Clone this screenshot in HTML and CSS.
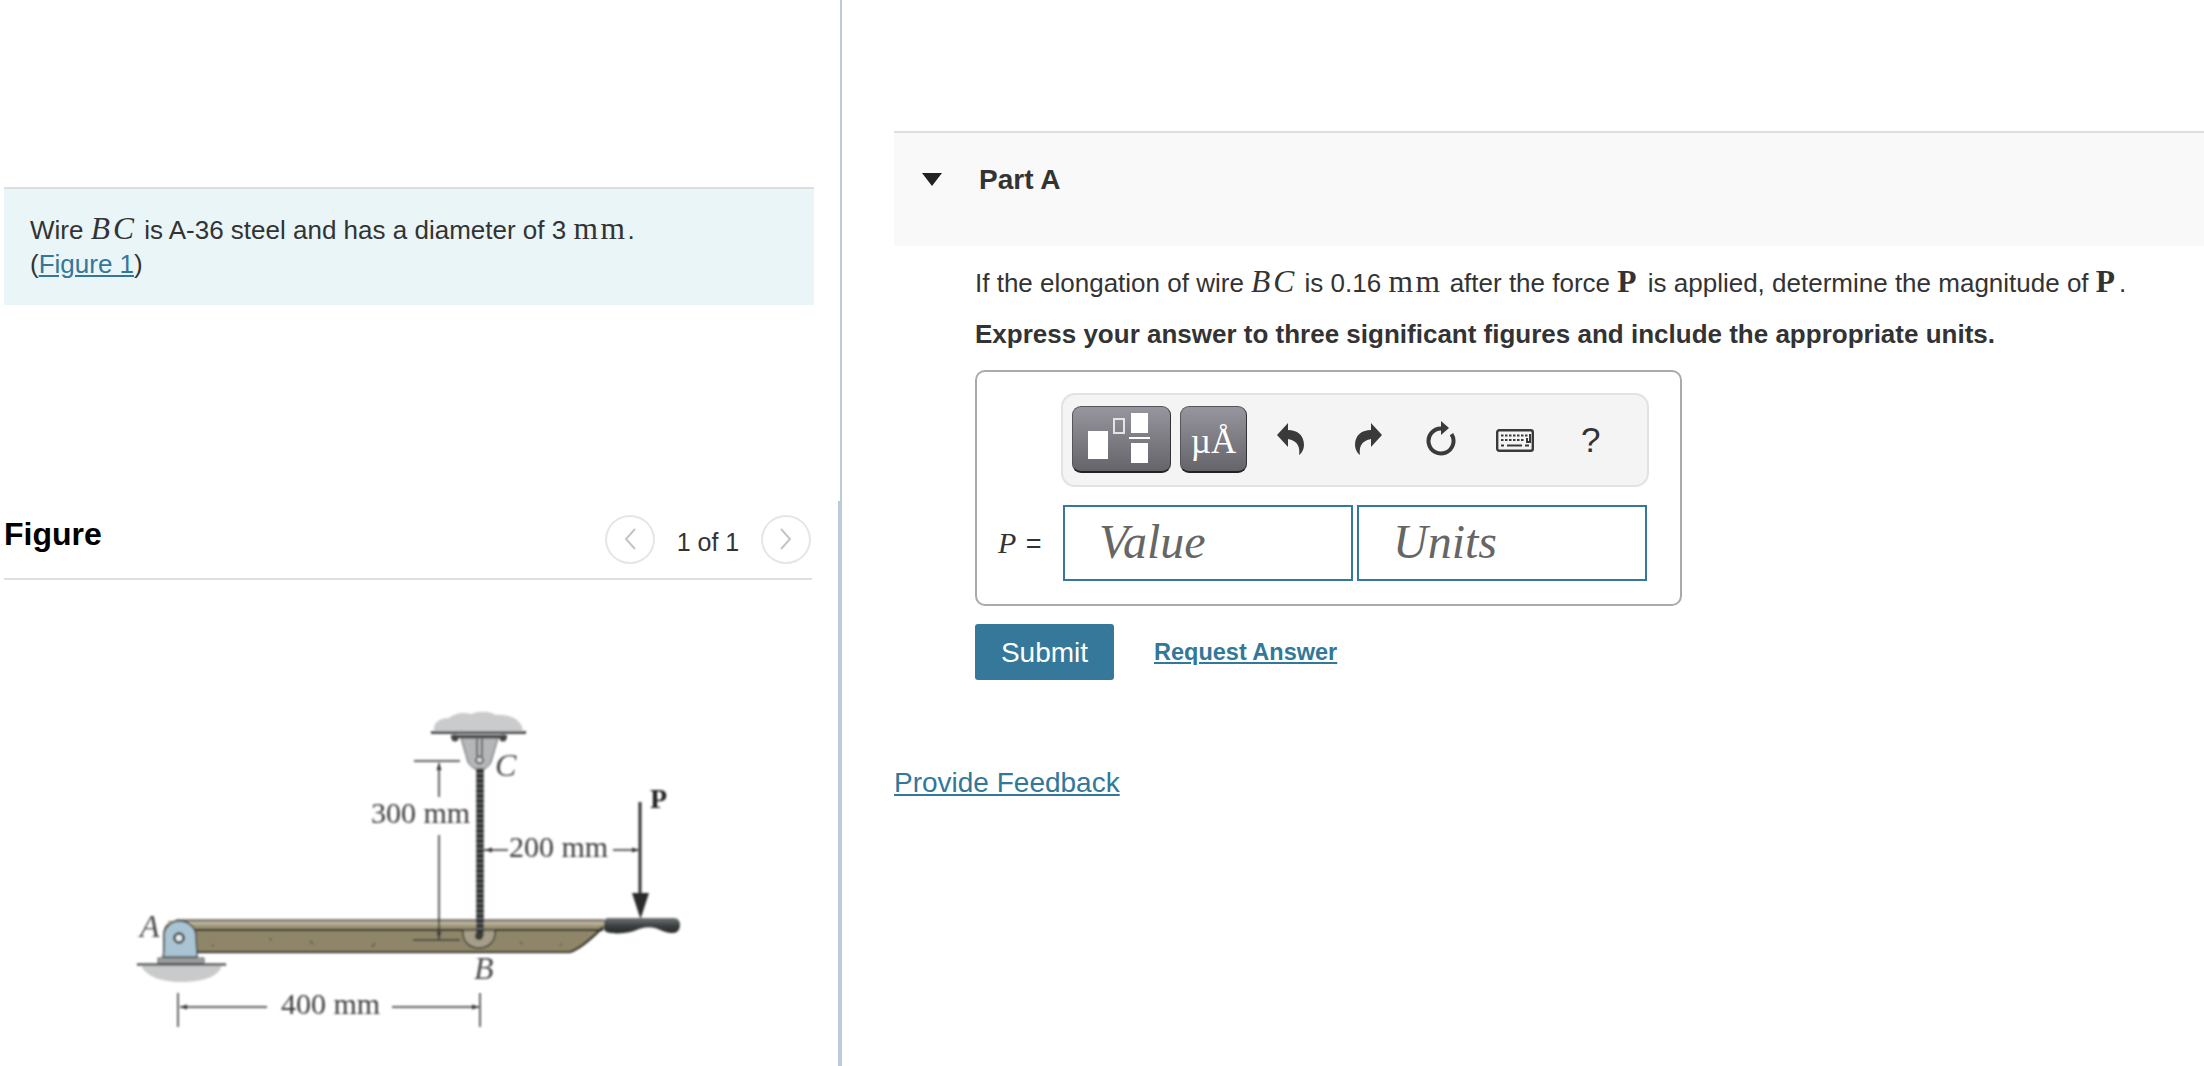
FILE: index.html
```html
<!DOCTYPE html>
<html lang="en">
<head>
<meta charset="utf-8">
<title>Part A</title>
<link rel="stylesheet" href="styles.css">
</head>
<body>
<div class="page">
  <aside class="left">
    <section class="intro">
      <div class="statement">
        <p>Wire <i class="math">BC</i> is A-36 steel and has a diameter of 3 <span class="unit">mm</span>.</p>
        <p>(<a href="#" class="link">Figure 1</a>)</p>
      </div>
    </section>
    <section class="figure">
      <header class="fig-head">
        <h2 class="fig-title">Figure</h2>
        <div class="pager">
          <span class="round"><svg class="chev" viewBox="0 0 12 22"><path d="M11 1 2 11l9 10"/></svg></span>
          <span class="count">1 of 1</span>
          <span class="round"><svg class="chev" viewBox="0 0 12 22"><path d="M1 1l9 10-9 10"/></svg></span>
        </div>
      </header>
      <svg class="diagram" viewBox="120 690 580 376" width="580" height="376">
        <defs>
          <filter id="soft" x="-5%" y="-5%" width="110%" height="110%"><feGaussianBlur stdDeviation="0.8"/></filter>
          <linearGradient id="flange" x1="0" y1="0" x2="0" y2="1">
            <stop offset="0" stop-color="#6d6650"/><stop offset=".18" stop-color="#c5bfaa"/><stop offset=".55" stop-color="#a39b80"/><stop offset="1" stop-color="#8e8568"/>
          </linearGradient>
          <linearGradient id="handle" x1="0" y1="0" x2="0" y2="1">
            <stop offset="0" stop-color="#6f7575"/><stop offset=".5" stop-color="#3c4142"/><stop offset="1" stop-color="#25282a"/>
          </linearGradient>
        </defs>
        <g filter="url(#soft)">
          <!-- ceiling and bracket C -->
          <path d="M434 731c-1-8 5-13 15-13 6-5 14-6 22-4 8-3 18-3 25 1 10-1 26 3 27 16z" fill="#c9cbcc"/>
          <path d="M431 732.500h95" class="ln" stroke-width="2.500"/>
          <path d="M451 735h56v3h-56z" fill="#3d3f40"/>
          <circle cx="455" cy="738" r="3.500" fill="#444"/><circle cx="503" cy="738" r="3.500" fill="#444"/>
          <path d="M461 738h37l-7 24c-2 5-7 8-11 8s-10-3-12-8z" fill="#b4b6b7" stroke="#555" stroke-width="1"/>
          <path d="M477 739v17M482 739v17" class="ln" stroke-width="1.200"/>
          <circle cx="479.500" cy="760" r="3.500" fill="#d5d6d6" stroke="#333" stroke-width="1.500"/>
          <!-- beam -->
          <path d="M163 952V935c0-10 6-15 16-15h425v5l-10 12c-8 7-16 13-24 15z" fill="#8f866a"/>
          <path d="M168 921h436v8H168z" fill="url(#flange)"/>
          <path d="M176 920h428" class="ln" stroke-width="1.200"/>
          <path d="M170 930h293M495 930h108" class="ln-dark" stroke-width="2"/>
          <path d="M163 952h407c9-3 20-12 33-25" class="ln-dark" stroke-width="2.200"/>
          <path d="M270 938l1 3M310 941l3 3M375 943l-3 4M520 942l3 2M560 944l2 1M212 945l2 1" class="speck" stroke-width="1.500"/>
          <path d="M463 930v3c0 9 7 15 16 15s16-6 16-15v-3z" fill="#a59e89" stroke="#3f3b30" stroke-width="1.500"/>
          <!-- handle -->
          <path d="M604 922c0-3 2-4 4-4h66c4 0 6 3 6 7 0 5-3 8-7 8-6 0-10-2-18-5-7-2-14 0-21 3-9 3-30 4-30-2z" fill="url(#handle)"/>
          <!-- support A -->
          <path d="M163 957c2-8 1-18 1-22 0-7 7-14 15-14s16 5 17 14c0 6 1 14 1 22z" fill="#a9c4d3" stroke="#444" stroke-width="1.500"/>
          <circle cx="179" cy="938" r="4.500" fill="#e8eef1" stroke="#333" stroke-width="2.500"/>
          <path d="M158 958h46v5h-46z" fill="#a1a3a2" stroke="#555" stroke-width="1"/>
          <path d="M141 965h81c-3 12-20 17-41 17-20 0-36-6-40-17z" fill="#c9cacb"/>
          <path d="M137 964.500h89" class="ln" stroke-width="2"/>
          <!-- wire -->
          <path d="M480 768v168" stroke="#2f3132" stroke-width="7.500"/>
          <path d="M480 768v168" stroke="#77797a" stroke-width="7.500" stroke-dasharray="1 4"/>
          <circle cx="479" cy="936" r="4" fill="#3a3a36"/>
          <!-- dimensions -->
          <path d="M414 761h46M413 940h47M439 763v34M439 835v105M484 850h24M613 850h25M180 1007h87M392 1007h87" class="ln" stroke-width="1.500"/>
          <path d="M178 993v34M480 993v34" class="tick" stroke-width="2"/>
          <path d="M439 763l-2.500 7h5zM439 939l-2.500-7h5zM485 850l7-2.500v5zM639 850l-7-2.500v5zM180 1007l7-2.500v5zM479 1007l-7-2.500v5z" fill="#333"/>
          <path d="M640 802v92" class="ln" stroke-width="3"/>
          <path d="M632 893h17l-8.500 26z" fill="#2b2b2b"/>
          <!-- labels -->
          <text class="dim" x="371" y="823">300 mm</text>
          <text class="dim" x="509" y="857">200 mm</text>
          <text class="dim" x="281" y="1014">400 mm</text>
          <text class="tag" x="495" y="776">C</text>
          <text class="tag" x="474" y="979">B</text>
          <text class="tag" x="140" y="937">A</text>
          <text class="force" x="650" y="808">P</text>
        </g>
      </svg>
    </section>
  </aside>

  <main class="right">
    <header class="part-head">
      <svg class="caret" viewBox="0 0 20 13"><path d="M0 0h20L10 13z"/></svg>
      <h1 class="part-title">Part A</h1>
    </header>
    <div class="part-body">
      <p class="question">If the elongation of wire <i class="math">BC</i> is 0.16 <span class="unit">mm</span> after the force <b class="vec">P</b> is applied, determine the magnitude of <b class="vec">P</b>.</p>
      <p class="instruction">Express your answer to three significant figures and include the appropriate units.</p>
      <div class="answer">
        <div class="toolbar">
          <span class="btn btn-frac">
            <svg class="frac" viewBox="0 0 99 67">
              <path class="solid" d="M16 26h20v28H16zM59 8h17v20H59zM57 32h21v2H57zM59 38h17v20H59z"/>
              <path class="hollow" d="M42 14h10v14H42z"/>
            </svg>
          </span>
          <span class="btn btn-unit">µÅ</span>
          <svg class="ico undo" viewBox="0 0 27 32"><path d="M0 12 11 0v7c9 0 16 5 16 15 0 4-2 8-5 10 1-6 0-14-11-16v8z"/></svg>
          <svg class="ico redo" viewBox="0 0 27 32"><path d="M27 12 16 0v7C7 7 0 12 0 22c0 4 2 8 5 10-1-6 0-14 11-16v8z"/></svg>
          <svg class="ico reset" viewBox="0 0 32 36"><path class="ring" d="M16 7.500a12.500 12.500 0 1 0 10.500 5.700"/><path d="M16 0l8 7-8 7z"/></svg>
          <svg class="ico keys" viewBox="0 0 38 23">
            <rect class="kb" x="1.200" y="1.200" width="35.600" height="20.600" rx="2"/>
            <path class="kd" stroke-dasharray="2.500 1.500" d="M5 6.500h28M5 11h24"/>
            <path class="kd" d="M31 9v4h3V5M5 16.500h3M11 16.500h15M29 16.500h4"/>
          </svg>
          <span class="help">?</span>
        </div>
        <div class="entry">
          <span class="label"><i>P</i> <span class="eq">=</span></span>
          <span class="field">Value</span>
          <span class="field">Units</span>
        </div>
      </div>
      <div class="actions">
        <a href="#" class="submit">Submit</a>
        <a href="#" class="request">Request Answer</a>
      </div>
    </div>
    <a href="#" class="feedback">Provide Feedback</a>
  </main>
</div>
</body>
</html>
```
FILE: styles.css
```css
* { box-sizing: border-box; }
html, body { margin: 0; height: 100%; background: #fff; }
body { overflow: hidden; font-family: "Liberation Sans", Arial, sans-serif; color: #333; }
p, h1, h2 { margin: 0; }

.page { display: flex; width: 2204px; height: 1066px; }

/* left column */
.left { display: flex; flex-direction: column; width: 842px; flex: none; }
.intro { height: 501px; padding: 187px 26px 0 4px; border-right: 2px solid #bccbdc; }
.statement {
  height: 118px; padding: 24px 26px 0;
  background: #eaf5f7; border-top: 2px solid #dcdfe0;
  font-size: 26px; line-height: 33.500px;
}
.math { font-family: "Liberation Serif", serif; font-style: italic; font-size: 31.500px; letter-spacing: 3px; line-height: 1; }
.unit { font-family: "Liberation Serif", serif; font-size: 31.500px; letter-spacing: 2.500px; line-height: 1; }
.vec { font-family: "Liberation Serif", serif; font-weight: 700; font-size: 31.500px; letter-spacing: 4px; line-height: 1; }
.link { color: #337799; }

.figure { flex: 1; padding-left: 4px; border-right: 4px solid #bccbdc; overflow: hidden; }
.fig-head {
  display: flex; justify-content: space-between; align-items: flex-start;
  width: 808px; height: 79px; padding: 13px 0 0; border-bottom: 2px solid #dfdfdf;
}
.fig-title { font-size: 32px; line-height: 40px; font-weight: 700; color: #000; }
.pager { display: flex; align-items: center; margin-right: 1px; height: 50px; }
.round {
  display: flex; align-items: center; justify-content: center;
  width: 50px; height: 49px; border: 2px solid #e6e6e6; border-radius: 50%;
}
.chev { width: 12px; height: 22px; fill: none; stroke: #c4c4c4; stroke-width: 2; }
.count { width: 106px; padding-top: 6px; text-align: center; font-size: 25px; }
.diagram { display: block; margin: 110px 0 0 116px; }
.ln { stroke: #333; fill: none; }
.ln-dark { stroke: #262420; fill: none; }
.speck { stroke: #5f583f; fill: none; }
.tick { stroke: #666; fill: none; }
.dim { font: 30px "Liberation Serif", serif; fill: #3c3c3c; }
.tag { font: italic 32px "Liberation Serif", serif; fill: #4a4a4a; }
.force { font: 700 28px "Liberation Serif", serif; fill: #222; }

/* right column */
.right { flex: 1; padding: 131px 0 0 52px; }
.part-head {
  display: flex; align-items: flex-start; height: 115px;
  padding: 27px 0 0 28px;
  background: #f9f9f9; border-top: 2px solid #dfdfdf;
}
.caret { width: 20px; height: 13px; margin-top: 13px; fill: #222; flex: none; }
.part-title { margin-left: 37px; font-size: 28px; line-height: 40px; font-weight: 700; color: #333; }
.part-body { padding-left: 81px; }
.question { margin-top: 19px; font-size: 26px; line-height: 36px; }
.instruction { margin-top: 15px; font-size: 26px; line-height: 36px; font-weight: 700; }

.answer {
  width: 707px; height: 236px; margin-top: 18px; padding: 21px 0 0 84px;
  border: 2px solid #aaa; border-radius: 10px;
}
.toolbar {
  display: flex; align-items: center;
  width: 588px; height: 94px; padding: 0 0 2px 9px;
  background: #f4f4f4; border: 2px solid #e2e2e2; border-radius: 14px;
}
.btn {
  display: flex; align-items: center; justify-content: center; height: 67px;
  background: linear-gradient(#97959d, #64646a);
  border: 1px solid #55555a; border-bottom: 2px solid #222; border-right-color: #333; border-radius: 9px;
}
.btn-frac { width: 99px; }
.btn-unit {
  width: 67px; margin-left: 9px; padding-top: 6px;
  font: 35px/1 "Liberation Serif", serif; color: #fff;
}
.frac { width: 99px; height: 67px; flex: none; }
.solid { fill: #fff; }
.hollow { fill: none; stroke: #e4e4e8; stroke-width: 2; }
.ico { flex: none; fill: #3a3a3a; }
.undo { width: 27px; height: 32px; margin-left: 30px; }
.redo { width: 27px; height: 32px; margin-left: 51px; }
.reset { width: 32px; height: 36px; margin-left: 43px; }
.ring { fill: none; stroke: #3a3a3a; stroke-width: 4; }
.keys { width: 38px; height: 23px; margin-left: 39px; margin-top: 3px; }
.kb { fill: none; stroke: #3a3a3a; stroke-width: 2.400; }
.kd { fill: none; stroke: #3a3a3a; stroke-width: 2; }
.help { margin-left: 47px; font-size: 35px; line-height: 1; color: #333; }

.entry { display: flex; align-items: center; margin: 18px 0 0 -84px; }
.label { width: 86px; padding-left: 21px; font: 30px "Liberation Serif", serif; color: #333; }
.eq { margin-left: 2px; font: 27px "Liberation Sans", sans-serif; }
.field {
  width: 290px; height: 76px; margin-right: 4px; padding-left: 34px;
  border: 2px solid #357899;
  font: italic 48px/70px "Liberation Serif", serif; color: #666;
}

.actions { display: flex; align-items: center; margin-top: 18px; }
.submit {
  display: block; width: 139px; height: 56px; border-radius: 3px;
  background: #357899; color: #fff; text-align: center; text-decoration: none;
  font-size: 28px; line-height: 57px;
}
.request { margin-left: 40px; font-size: 23.500px; font-weight: 700; color: #337799; }
.feedback { display: inline-block; margin-top: 85px; font-size: 28px; line-height: 36px; color: #337799; }
```
